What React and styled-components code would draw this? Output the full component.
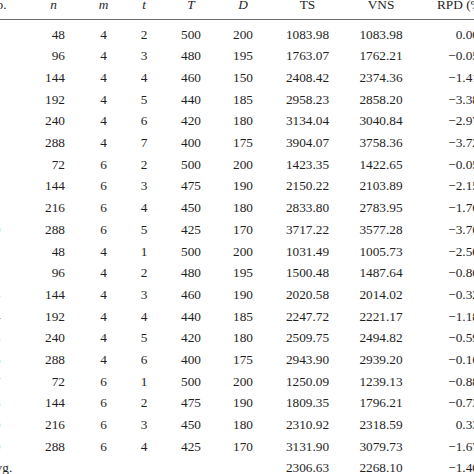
import React from 'react'
import styled, { createGlobalStyle } from 'styled-components'

const GlobalStyle = createGlobalStyle`
  html, body {
    margin: 0;
    padding: 0;
    background: #ffffff;
    overflow: hidden;
  }
`

// widths of the columns, first one starts off-screen at -13px
const COLS = '40px 57px 39px 42px 52px 52px 77px 70px 63px'

const Page = styled.div`
  width: 474px;
  height: 474px;
  overflow: hidden;
  font-family: 'Liberation Serif', 'Times New Roman', serif;
  font-size: 13.3px;
  color: #1f1f1f;
`

const Table = styled.div`
  margin: -5.85px 0 0 -13px;
  width: 492px;
`

const Head = styled.div`
  display: grid;
  grid-template-columns: ${COLS};
  line-height: 21.7px;
  padding-bottom: 3.2px;
  border-bottom: 1.5px solid #6a6a6a;
`

const Body = styled.div`
  padding-top: 3.6px;
`

const Row = styled.div`
  display: grid;
  grid-template-columns: ${COLS};
  line-height: 21.7px;
  height: 21.7px;
`

const Cell = styled.div`
  white-space: nowrap;
  text-align: ${p => p.align || 'center'};
  padding-right: ${p => p.pr || 0}px;
  padding-left: ${p => p.pl || 0}px;
  font-style: ${p => (p.italic ? 'italic' : 'normal')};
`

const rows = [
  [48, 4, 2, 500, 200, '1083.98', '1083.98', '0.00'],
  [96, 4, 3, 480, 195, '1763.07', '1762.21', '−0.05'],
  [144, 4, 4, 460, 150, '2408.42', '2374.36', '−1.41'],
  [192, 4, 5, 440, 185, '2958.23', '2858.20', '−3.38'],
  [240, 4, 6, 420, 180, '3134.04', '3040.84', '−2.97'],
  [288, 4, 7, 400, 175, '3904.07', '3758.36', '−3.72'],
  [72, 6, 2, 500, 200, '1423.35', '1422.65', '−0.05'],
  [144, 6, 3, 475, 190, '2150.22', '2103.89', '−2.15'],
  [216, 6, 4, 450, 180, '2833.80', '2783.95', '−1.76'],
  [288, 6, 5, 425, 170, '3717.22', '3577.28', '−3.76'],
  [48, 4, 1, 500, 200, '1031.49', '1005.73', '−2.50'],
  [96, 4, 2, 480, 195, '1500.48', '1487.64', '−0.86'],
  [144, 4, 3, 460, 190, '2020.58', '2014.02', '−0.32'],
  [192, 4, 4, 440, 185, '2247.72', '2221.17', '−1.18'],
  [240, 4, 5, 420, 180, '2509.75', '2494.82', '−0.59'],
  [288, 4, 6, 400, 175, '2943.90', '2939.20', '−0.16'],
  [72, 6, 1, 500, 200, '1250.09', '1239.13', '−0.88'],
  [144, 6, 2, 475, 190, '1809.35', '1796.21', '−0.73'],
  [216, 6, 3, 450, 180, '2310.92', '2318.59', '0.33'],
  [288, 6, 4, 425, 170, '3131.90', '3079.73', '−1.67'],
]

const DataRow = ({ label, values }) => (
  <Row>
    <Cell align="left">{label}</Cell>
    <Cell align="right" pr={19}>{values[0]}</Cell>
    <Cell>{values[1]}</Cell>
    <Cell>{values[2]}</Cell>
    <Cell>{values[3]}</Cell>
    <Cell>{values[4]}</Cell>
    <Cell>{values[5]}</Cell>
    <Cell>{values[6]}</Cell>
    <Cell align="right">{values[7]}</Cell>
  </Row>
)

export default function App() {
  return (
    <Page>
      <GlobalStyle />
      <Table>
        <Head>
          <Cell align="left">No.</Cell>
          <Cell align="right" pr={27} italic>n</Cell>
          <Cell italic>m</Cell>
          <Cell italic>t</Cell>
          <Cell italic>T</Cell>
          <Cell italic>D</Cell>
          <Cell>TS</Cell>
          <Cell>VNS</Cell>
          <Cell align="left" pl={21}>RPD (%)</Cell>
        </Head>
        <Body>
          {rows.map((r, i) => (
            <DataRow key={i} label={i + 1} values={r} />
          ))}
          <DataRow label="Avg." values={['', '', '', '', '', '2306.63', '2268.10', '−1.40']} />
        </Body>
      </Table>
    </Page>
  )
}
